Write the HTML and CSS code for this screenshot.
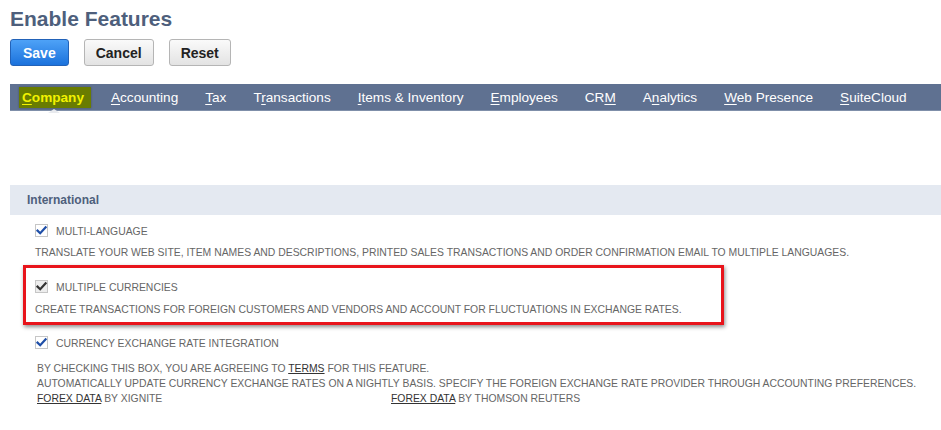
FILE: index.html
```html
<!DOCTYPE html>
<html>
<head>
<meta charset="utf-8">
<title>Enable Features</title>
<link rel="stylesheet" href="styles.css">
</head>
<body>
<div class="page">
  <h1 class="title">Enable Features</h1>
  <div class="actions">
    <button class="btn btn-primary">Save</button>
    <button class="btn">Cancel</button>
    <button class="btn">Reset</button>
  </div>
  <nav class="tabs">
    <a class="tab tab-active"><u>C</u>ompany</a>
    <a class="tab"><u>A</u>ccounting</a>
    <a class="tab"><u>T</u>ax</a>
    <a class="tab">T<u>r</u>ansactions</a>
    <a class="tab"><u>I</u>tems &amp; Inventory</a>
    <a class="tab"><u>E</u>mployees</a>
    <a class="tab">CR<u>M</u></a>
    <a class="tab">A<u>n</u>alytics</a>
    <a class="tab"><u>W</u>eb Presence</a>
    <a class="tab"><u>S</u>uiteCloud</a>
  </nav>
  <div class="spacer"></div>
  <section class="section">
    <div class="section-head">International</div>

    <div class="feature feature-first">
      <div class="feature-row">
        <span class="check check-blue"><svg viewBox="0 0 13 13" width="13" height="13"><path d="M2.5 6.6 L5.2 9.2 L10.6 3.3" fill="none" stroke="#1f4fa8" stroke-width="2.2" stroke-linecap="square"/></svg></span>
        <span class="label">MULTI-LANGUAGE</span>
      </div>
      <p class="desc">TRANSLATE YOUR WEB SITE, ITEM NAMES AND DESCRIPTIONS, PRINTED SALES TRANSACTIONS AND ORDER CONFIRMATION EMAIL TO MULTIPLE LANGUAGES.</p>
    </div>

    <div class="highlight">
      <div class="feature-row">
        <span class="check check-gray"><svg viewBox="0 0 13 13" width="13" height="13"><path d="M2.5 6.6 L5.2 9.2 L10.6 3.3" fill="none" stroke="#333" stroke-width="2.2" stroke-linecap="square"/></svg></span>
        <span class="label">MULTIPLE CURRENCIES</span>
      </div>
      <p class="desc desc-boxed">CREATE TRANSACTIONS FOR FOREIGN CUSTOMERS AND VENDORS AND ACCOUNT FOR FLUCTUATIONS IN EXCHANGE RATES.</p>
    </div>

    <div class="feature feature-third">
      <div class="feature-row">
        <span class="check check-blue"><svg viewBox="0 0 13 13" width="13" height="13"><path d="M2.5 6.6 L5.2 9.2 L10.6 3.3" fill="none" stroke="#1f4fa8" stroke-width="2.2" stroke-linecap="square"/></svg></span>
        <span class="label">CURRENCY EXCHANGE RATE INTEGRATION</span>
      </div>
      <div class="notes">
        <p class="note">BY CHECKING THIS BOX, YOU ARE AGREEING TO <a class="link">TERMS</a> FOR THIS FEATURE.</p>
        <p class="note">AUTOMATICALLY UPDATE CURRENCY EXCHANGE RATES ON A NIGHTLY BASIS. SPECIFY THE FOREIGN EXCHANGE RATE PROVIDER THROUGH ACCOUNTING PREFERENCES.</p>
        <div class="providers">
          <p class="note provider"><a class="link">FOREX DATA</a> BY XIGNITE</p>
          <p class="note provider"><a class="link">FOREX DATA</a> BY THOMSON REUTERS</p>
        </div>
      </div>
    </div>
  </section>
</div>
</body>
</html>
```

FILE: styles.css
```css
* { box-sizing: border-box; }

html, body {
  margin: 0;
  padding: 0;
  background: #ffffff;
}

body {
  font-family: "Liberation Sans", Arial, sans-serif;
  color: #666666;
  width: 941px;
  height: 430px;
  overflow: hidden;
}

.page {
  padding-left: 10px;
}

.title {
  margin: 0;
  padding-top: 7px;
  font-size: 21px;
  line-height: 24px;
  font-weight: bold;
  color: #4e5f7c;
}

.actions {
  display: flex;
  gap: 15px;
  margin-top: 8px;
  height: 27px;
}

.btn {
  height: 27px;
  padding: 0 11px;
  font-family: "Liberation Sans", Arial, sans-serif;
  font-size: 14px;
  font-weight: bold;
  color: #222222;
  background: linear-gradient(#fafafa, #e3e3e3);
  border: 1px solid #b5b5b5;
  border-radius: 3px;
}

.btn-primary {
  color: #ffffff;
  padding: 0 12px;
  background: linear-gradient(#4ea2f7, #1b72dc);
  border-color: #2262b8;
}

.tabs {
  display: flex;
  align-items: center;
  margin-top: 18px;
  height: 27px;
  padding-left: 9px;
  background: #5f7191;
  border-bottom: 1px solid #7f8fa9;
  position: relative;
}

.tab {
  display: block;
  font-size: 13.6px;
  line-height: 21px;
  padding-top: 1px;
  color: #ffffff;
  margin-right: 21px;
  padding-left: 3px;
  padding-right: 3px;
  white-space: nowrap;
}

.tab u {
  text-decoration-thickness: 1px;
  text-underline-offset: 2px;
}

.tab-active {
  position: relative;
  font-weight: bold;
  color: #f2f200;
  background: #697c00;
  padding-top: 0;
  padding-right: 7px;
  margin-right: 17px;
  box-shadow: 0 0 2px rgba(0, 0, 0, 0.3);
}

.tab-active::after {
  content: "";
  position: absolute;
  left: 29px;
  bottom: -5px;
  border-left: 6px solid transparent;
  border-right: 6px solid transparent;
  border-bottom: 4px solid #e8eaee;
}

.spacer {
  height: 74px;
}

.section-head {
  height: 30px;
  line-height: 30px;
  padding-left: 17px;
  background: #e4e9f1;
  font-size: 12px;
  font-weight: bold;
  color: #4e5f7c;
}

.feature {
  padding-left: 25px;
}

.feature-first {
  padding-top: 7px;
}

.feature-row {
  display: flex;
  align-items: center;
  gap: 8px;
  height: 16px;
}

.check {
  display: block;
  width: 13px;
  height: 13px;
  border: 1px solid #c6c6c6;
  background: #ffffff;
  position: relative;
}

.check svg {
  position: absolute;
  left: -1px;
  top: -1px;
}

.check-gray {
  background: #ededed;
}

.label {
  font-size: 10.4px;
  line-height: 16px;
  color: #666666;
  padding-top: 3px;
}

.desc {
  margin: 8px 0 0 0;
  font-size: 10.4px;
  line-height: 14px;
  color: #666666;
}

.highlight {
  width: 701px;
  margin: 5px 0 0 13px;
  padding: 10px 0 5px 9px;
  border: 3px solid #e8141b;
  box-shadow: 1px 2px 4px rgba(0, 0, 0, 0.45);
}

.desc-boxed {
  margin-top: 9px;
}

.feature-third {
  padding-top: 9px;
}

.notes {
  margin-top: 11px;
  padding-left: 2px;
}

.note {
  margin: 0;
  font-size: 10.4px;
  line-height: 15px;
  color: #666666;
}

.link {
  color: #333333;
  text-decoration: underline;
}

.providers {
  display: flex;
}

.provider {
  width: 354px;
}
```
